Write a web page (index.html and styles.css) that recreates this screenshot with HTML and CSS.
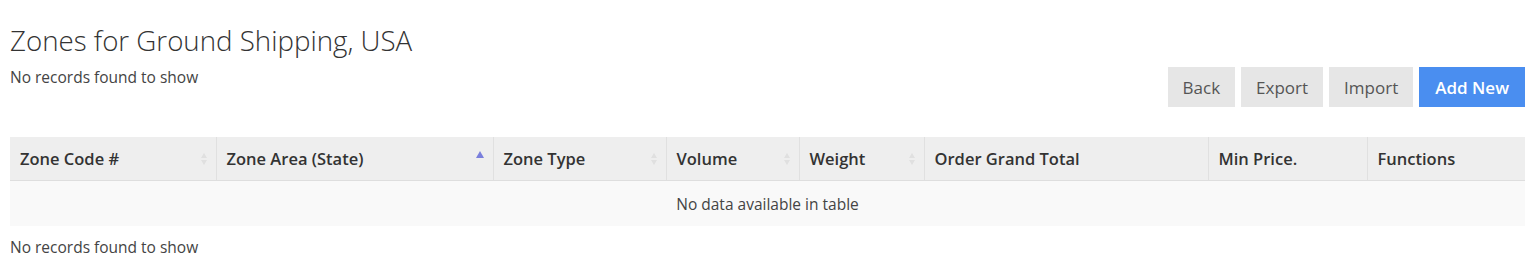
FILE: index.html
```html
<!DOCTYPE html>
<html>
<head>
    <title>Zones for Ground Shipping, USA</title>
    <link rel="stylesheet" href="styles.css">
</head>
<body>
    <div class="page">
        <div class="top">
            <div class="heading">
                <h1>Zones for Ground Shipping, USA</h1>
                <p class="info">No records found to show</p>
            </div>
            <div class="actions">
                <button class="btn">Back</button>
                <button class="btn">Export</button>
                <button class="btn">Import</button>
                <button class="btn btn-primary">Add New</button>
            </div>
        </div>

        <table class="grid">
            <colgroup>
                <col style="width: 206px">
                <col style="width: 277px">
                <col style="width: 173px">
                <col style="width: 133px">
                <col style="width: 125px">
                <col style="width: 284px">
                <col style="width: 159px">
                <col>
            </colgroup>
            <thead>
                <tr>
                    <th class="sorting">Zone Code #</th>
                    <th class="sorting sorting-asc">Zone Area (State)</th>
                    <th class="sorting">Zone Type</th>
                    <th class="sorting">Volume</th>
                    <th class="sorting">Weight</th>
                    <th>Order Grand Total</th>
                    <th>Min Price.</th>
                    <th>Functions</th>
                </tr>
            </thead>
            <tbody>
                <tr>
                    <td colspan="8" class="empty">No data available in table</td>
                </tr>
            </tbody>
        </table>

        <p class="info info-bottom">No records found to show</p>
    </div>
</body>
</html>
```

FILE: styles.css
```css
body {
    font-family: "Open Sans", Arial, sans-serif;
    color: #333;
    background-color: #fff;
    margin: 0;
}

.page {
    padding: 22px 11px 0 10px;
}

.top {
    display: flex;
    justify-content: space-between;
    align-items: flex-start;
}

.heading h1 {
    font-size: 27.7px;
    font-weight: 300;
    color: #333;
    margin: 0;
    line-height: 36px;
}

.info {
    font-size: 15.5px;
    color: #444;
    margin: 8px 0 0 0;
    line-height: 22px;
}

.actions {
    display: flex;
    gap: 6px;
    margin-top: 45px;
}

.btn {
    font-family: "Open Sans", Arial, sans-serif;
    font-size: 17px;
    color: #555;
    background-color: #e6e6e6;
    border: none;
    height: 40px;
    padding: 0 15px;
    cursor: pointer;
}

.btn-primary {
    background-color: #4a8ef0;
    color: #fff;
    font-weight: 600;
    padding: 0 16px;
}

.grid {
    width: 100%;
    border-collapse: collapse;
    table-layout: fixed;
    margin-top: 30px;
    font-size: 16.5px;
}

.grid th {
    position: relative;
    text-align: left;
    font-weight: 600;
    color: #333;
    background-color: #eeeeee;
    height: 43px;
    padding: 0 10px;
    border-left: 1px solid #e0e0e0;
    border-bottom: 1px solid #dedede;
}

.grid th:first-child {
    border-left: none;
}

.grid th.sorting::before,
.grid th.sorting::after {
    content: "";
    position: absolute;
    right: 9px;
    border-left: 3px solid transparent;
    border-right: 3px solid transparent;
}

.grid th.sorting::before {
    top: 16px;
    border-bottom: 5px solid #e0e0e0;
}

.grid th.sorting::after {
    top: 23px;
    border-top: 5px solid #e0e0e0;
}

.grid th.sorting-asc::before {
    top: 14px;
    border-left-width: 4px;
    border-right-width: 4px;
    border-bottom: 7px solid #7a7fdc;
}

.grid th.sorting-asc::after {
    display: none;
}

.grid td.empty {
    text-align: center;
    background-color: #f9f9f9;
    height: 43px;
    font-size: 15.5px;
    color: #444;
}

.info-bottom {
    margin-top: 10px;
}
```
